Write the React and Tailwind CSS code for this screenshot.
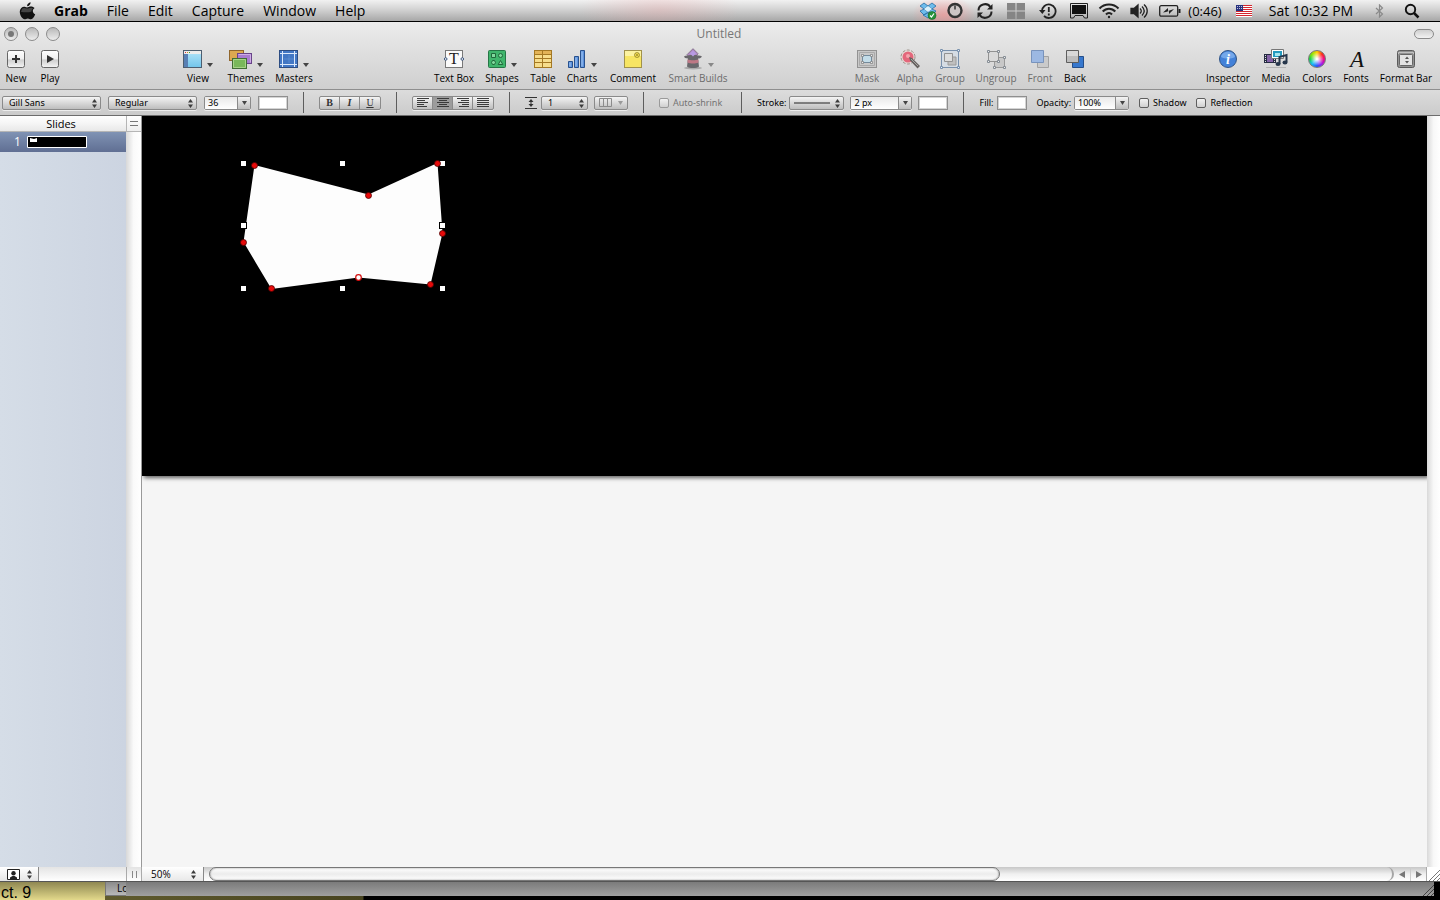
import React from "react";

function Chevrons({ className = "" }) {
  return (
    <svg className={className} width="5" height="9" viewBox="0 0 5 9" fill="#3c3c3c" aria-hidden="true">
      <path d="M2.5 0 5 3.4H0zM2.5 9 5 5.6H0z" />
    </svg>
  );
}

const boxed =
  "h-[14px] border border-[#8a8a8a] rounded-[2px] shadow-[0_1px_0_#eeeeee]";
const pressed = "bg-linear-to-b from-[#f4f4f4] to-[#bdbdbd]";

function Popup({ label, options, width, children }) {
  return (
    <span className={`relative flex ${width}`}>
      <select
        aria-label={label}
        className={`w-full appearance-none px-1.5 text-[9px] leading-3 text-black ${boxed} ${pressed}`}
      >
        {options.map((o) => (
          <option key={o}>{o}</option>
        ))}
      </select>
      {children}
      <Chevrons className="pointer-events-none absolute right-1 top-[3px]" />
    </span>
  );
}

function Combo({ label, value, width }) {
  return (
    <span className={`flex overflow-hidden bg-white ${boxed} ${width}`}>
      <input
        aria-label={label}
        defaultValue={value}
        className="w-0 min-w-0 grow bg-linear-to-b from-[#e9e9e9] to-white px-[3px] text-[9px] leading-3"
      />
      <button
        aria-label={`${label} choices`}
        className={`flex w-[13px] items-center justify-center border-l border-[#8a8a8a] ${pressed}`}
      >
        <svg width="5" height="4" viewBox="0 0 5 4" fill="#444"><path d="M0 0h5L2.5 4z" /></svg>
      </button>
    </span>
  );
}

function Swatch({ label }) {
  return (
    <button
      aria-label={label}
      className="h-[14px] w-[30px] border border-[#8f8f8f] bg-white shadow-[inset_0_0_0_1px_#d4d4d4]"
    />
  );
}

function Sep() {
  return <span className="h-[21px] w-px bg-[#5d5d5d]" />;
}

function Check({ label, disabled }) {
  return (
    <label className={`flex items-center gap-1 ${disabled ? "min-w-[67px] text-[#737373]" : "text-black"}`}>
      <input
        type="checkbox"
        disabled={disabled}
        className={`size-[10px] appearance-none rounded-[2px] border bg-linear-to-b from-[#f2f2f2] to-[#d0d0d0] ${disabled ? "border-[#9a9a9a]" : "border-[#5e5e5e]"}`}
      />
      {label}
    </label>
  );
}

function AlignIcon({ widths, right, center }) {
  return (
    <svg width="12" height="10" viewBox="0 0 12 10" fill="#3a3a3a">
      {widths.map((w, i) => (
        <rect key={i} x={right ? 12 - w : center ? (12 - w) / 2 : 0} y={i * 2} width={w} height="1" />
      ))}
    </svg>
  );
}

const iconProps = { width: 20, height: 20, viewBox: "0 0 20 20" };

const icons = {
  New: (
    <svg {...iconProps}>
      <rect x="1.5" y="1.5" width="17" height="17" rx="2" fill="url(#btn)" stroke="#666" />
      <path d="M10 6v8M6 10h8" stroke="#333" strokeWidth="2" />
    </svg>
  ),
  Play: (
    <svg {...iconProps}>
      <rect x="1.5" y="1.5" width="17" height="17" rx="2" fill="url(#btn)" stroke="#666" />
      <path d="M7 6v8l7-4z" fill="#333" />
    </svg>
  ),
  View: (
    <svg {...iconProps}>
      <rect x=".5" y="1.5" width="18" height="17" fill="url(#sky)" stroke="#4c5e70" />
      <path d="M1 2h17v3H1z" fill="#ececec" />
      <path d="M1 5h4v13H1z" fill="#5880b4" />
      <path d="M2 3h1v1H2z" fill="#d33" /><path d="M4 3h1v1H4z" fill="#c92" /><path d="M6 3h1v1H6z" fill="#3a3" />
    </svg>
  ),
  Themes: (
    <svg width="24" height="20" viewBox="0 0 24 20">
      <rect x=".5" y="1.5" width="14" height="10" fill="#dca850" stroke="#90662c" />
      <rect x="8.5" y="4.5" width="14" height="10" fill="#a97bd0" stroke="#684489" />
      <path d="M9.500 5.500h12v8" fill="none" stroke="#cfaee6" />
      <rect x="3.500" y="9.500" width="14" height="10" fill="#79b85a" stroke="#416d35" />
      <path d="M4.500 10.500h12v8h-12z" fill="none" stroke="#a7d389" />
    </svg>
  ),
  Masters: (
    <svg {...iconProps}>
      <rect x=".5" y="1.500" width="18" height="17" fill="#4277c4" stroke="#2d4d82" />
      <path d="M1 4.500h17M1 15.500h17M3.500 2v16M15.500 2v16" stroke="#dce9fb" />
      <path d="M5 10h10M10 6v8" stroke="#6798d8" strokeWidth=".6" />
    </svg>
  ),
  "Text Box": (
    <svg {...iconProps}>
      <rect x="1.500" y="1.500" width="17" height="17" fill="#fafafa" stroke="#787878" />
      <text x="10" y="15" textAnchor="middle" fontFamily="Liberation Serif, serif" fontSize="16" fill="#222">T</text>
      <circle cx="1.700" cy="10" r="1.300" fill="#fff" stroke="#39547d" />
      <circle cx="18.300" cy="10" r="1.300" fill="#fff" stroke="#39547d" />
    </svg>
  ),
  Shapes: (
    <svg {...iconProps}>
      <rect x="1.500" y="1.500" width="17" height="17" rx="1" fill="#40b56c" stroke="#267646" />
      <g fill="#82d99e" stroke="#20683b"><path d="M4.500 4.500h4v4h-4z" /><circle cx="13.500" cy="6.500" r="2" /><path d="M5.500 11.500h2l1 2-1 2h-2l-1-2zM13.500 11.500l2.300 4h-4.600z" /></g>
    </svg>
  ),
  Table: (
    <svg {...iconProps}>
      <rect x="1.500" y="1.500" width="17" height="17" fill="#f7dd8b" stroke="#a47823" />
      <path d="M2 2h16v3H2z" fill="#e3b357" />
      <path d="M2 5.500h16M2 9.500h16M2 13.500h16M9.500 2v16" stroke="#a47823" />
    </svg>
  ),
  Charts: (
    <svg {...iconProps}>
      <g fill="#5d92dc" stroke="#28518e"><path d="M1.500 12.500h4v6h-4zM7.500 7.500h4v11h-4zM13.500 1.500h4v17h-4z" /></g>
      <path d="M3 13.500v4M9 8.500v9M15 2.500v15" stroke="#a7c9f3" />
    </svg>
  ),
  Comment: (
    <svg {...iconProps}>
      <rect x="1.500" y="1.500" width="17" height="17" fill="#f7e563" stroke="#a1924b" />
      <path d="M2 2h16v5H2z" fill="#fcf2a0" />
      <circle cx="14" cy="6" r="2.500" fill="#f5e04e" stroke="#98852d" strokeWidth=".8" />
      <path d="m12.500 4.500 3 3m0-3-3 3" stroke="#98852d" strokeWidth=".7" />
    </svg>
  ),
  "Smart Builds": (
    <svg width="22" height="22" viewBox="0 0 22 22">
      <ellipse cx="11" cy="20" rx="9" ry="1.500" fill="#aaa" />
      <path d="m11 .7 5 5-4 5h-3l-4-4z" fill="#b18ac5" stroke="#85718e" />
      <path d="M2 8.500c3-2 15-2 18 0-1 1.800-3 2-4 2l1 8c-2 2-10 2-12 0l1-8c-2 0-4-1-4-2z" fill="#69686c" />
      <path d="M5.500 11.500c3 1 8 1 11 0v3c-3 1.300-8 1.300-11 0z" fill="#be7885" />
      <path d="m11 2.500 3 3-3 3-3-3z" fill="#b79be3" />
    </svg>
  ),
  Mask: (
    <svg {...iconProps}>
      <rect x=".5" y="1.500" width="19" height="17" fill="#c8c8c8" stroke="#929292" />
      <path d="M2.500 3.500h15v13h-15z" fill="none" stroke="#aaa" />
      <rect x="5.500" y="6.500" width="9" height="7" fill="#c3dce8" stroke="#748b9c" />
      <path d="M4.500 5.500h2v2h-2zM13.500 5.500h2v2h-2zM4.500 12.500h2v2h-2zM13.500 12.500h2v2h-2z" fill="#eee" stroke="#7d7d7d" strokeWidth=".7" />
    </svg>
  ),
  Alpha: (
    <svg {...iconProps}>
      <circle cx="8" cy="8" r="7" fill="#e5ded9" stroke="#9b8f88" strokeDasharray="3 1.500" />
      <circle cx="8" cy="8" r="5.500" fill="#e4677b" />
      <circle cx="8" cy="7" r="2" fill="#f3a5ac" />
      <path d="m9 8 3 1 8 8-2.500 2.500-7.500-8z" fill="#66625f" />
      <path d="m11 10 7 7" stroke="#a5a5a5" />
    </svg>
  ),
  Group: (
    <svg {...iconProps}>
      <rect x="1.500" y="1.500" width="17" height="17" fill="#d5dce4" stroke="#7890ac" />
      <path d="M8 8h8v8H8z" fill="#bfbfbf" stroke="#9a9a9a" /><path d="M4.500 4.500h8v8h-8z" fill="#ddd" stroke="#929292" />
      <g fill="#e9f1fc" stroke="#7890ac"><path d="M.500.500h2v2h-2zM17.500.500h2v2h-2zM.500 17.500h2v2h-2zM17.500 17.500h2v2h-2z" /></g>
    </svg>
  ),
  Ungroup: (
    <svg {...iconProps}>
      <path d="M8.500 8.500h10v10h-10z" fill="#c8c8c8" stroke="#999" /><path d="M2.500 2.500h10v10h-10z" fill="#dadada" stroke="#929292" />
      <g fill="#eee" stroke="#858c94"><path d="M1.500 1.500h2v2h-2zM11.500 1.500h2v2h-2zM1.500 11.500h2v2h-2zM11.500 11.500h2v2h-2zM17.500 7.500h2v2h-2zM7.500 17.500h2v2h-2zM17.500 17.500h2v2h-2z" /></g>
    </svg>
  ),
  Front: (
    <svg {...iconProps}>
      <path d="M7.500 7.500h11v11h-11z" fill="#cacaca" stroke="#a2a2a2" />
      <path d="M1.500 1.500h12v12h-12z" fill="#9cb8e2" stroke="#7893bc" />
    </svg>
  ),
  Back: (
    <svg {...iconProps}>
      <path d="M7.500 7.500h11v11h-11z" fill="#3778ce" stroke="#254f8a" />
      <path d="M1.500 1.500h12v12h-12z" fill="#bdbdbd" stroke="#5e5e5e" /><path d="M2 2h11v5H2z" fill="#d8d8d8" />
    </svg>
  ),
  Inspector: (
    <svg {...iconProps}>
      <circle cx="10" cy="10" r="8.500" fill="#4381d8" stroke="#315587" />
      <path d="M3 8c1-7 13-7 14 0-4 2-10 2-14 0z" fill="#74a8ea" />
      <text x="10" y="15" textAnchor="middle" fontFamily="Liberation Serif, serif" fontSize="14" fontStyle="italic" fontWeight="700" fill="#fff">i</text>
    </svg>
  ),
  Media: (
    <svg width="26" height="20" viewBox="0 0 26 20">
      <path d="M1 5h12v9H1z" fill="#252b42" /><path d="M4 6h6v7H4z" fill="#8564a8" /><path d="M2.500 6v7M11.500 6v7" stroke="#ddd" strokeDasharray="1 1" />
      <path d="M8.500.500h12v9h-12z" fill="#fff" stroke="#777" /><path d="M10 2h9v6h-9z" fill="#259bc0" /><path d="M12 4h5v3h-5z" fill="#a6e5ef" />
      <path d="M16.500 15V8l7-2v7" fill="none" stroke="#26364b" strokeWidth="2" /><ellipse cx="15" cy="15" rx="2.500" ry="2" fill="#26364b" /><ellipse cx="22" cy="13.500" rx="2.500" ry="2" fill="#26364b" />
      <path d="M3 18.500h20" stroke="#b4b4b4" />
    </svg>
  ),
  Colors: (
    <span className="size-[18px] rounded-full border border-[#777] bg-[radial-gradient(circle,white_5%,transparent_60%),conic-gradient(from_0deg,#ffd000,#ff2a16,#f10583,#a418e8,#2455ff,#12bdf2,#12d345,#8ce400,#ffd000)]" />
  ),
  Fonts: (
    <svg width="20" height="22" viewBox="0 0 20 22">
      <text x="11" y="19" textAnchor="middle" fontFamily="Liberation Serif, serif" fontSize="23" fontStyle="italic" fill="#111">A</text>
    </svg>
  ),
  "Format Bar": (
    <svg {...iconProps}>
      <rect x="1.500" y="1.500" width="17" height="17" rx="2" fill="#929292" stroke="#5b5b5b" />
      <path d="M2.500 5V3.500h15V5" fill="none" stroke="#c1c1c1" />
      <rect x="3.500" y="5.500" width="13" height="11" rx="1" fill="#e3e3e3" stroke="#666" />
      <path d="m11 7.500 2 2.500H9zM11 14.500 9 12h4z" fill="#555" />
    </svg>
  ),
};

const groups = [
  [["New", "w-8"], ["Play", "w-9"]],
  [["View", "w-12", true], ["Themes", "w-12", true], ["Masters", "w-12", true]],
  [["Text Box", "w-12"], ["Shapes", "w-12", true], ["Table", "w-[34px]"], ["Charts", "w-11", true], ["Comment", "w-[58px]"], ["Smart Builds", "w-[72px]", true, true]],
  [["Mask", "w-11", false, true], ["Alpha", "w-[42px]", false, true], ["Group", "w-[38px]", false, true], ["Ungroup", "w-[54px]", false, true], ["Front", "w-[34px]", false, true], ["Back", "w-9"]],
  [["Inspector", "w-[54px]"], ["Media", "w-[42px]"], ["Colors", "w-10"], ["Fonts", "w-[38px]"], ["Format Bar", "w-[62px]"]],
];

const spacers = ["", "grow-[106]", "grow-[112]", "grow-[111]", "grow-[108]"];

function Tool({ name, width, menu, disabled }) {
  return (
    <button disabled={disabled} className={`flex flex-col items-center ${width}`}>
      <span className="flex h-[22px] items-center gap-1">
        {icons[name]}
        {menu && (
          <svg className="mt-3" width="6" height="4" viewBox="0 0 6 4" fill={disabled ? "#888" : "#444"}><path d="M0 0h6L3 4z" /></svg>
        )}
      </span>
      <span className={`whitespace-nowrap text-[10px] leading-4 ${disabled ? "text-[#6c6c6c]" : "text-black"}`}>{name}</span>
    </button>
  );
}

function MenuBar() {
  return (
    <header className="flex h-[22px] shrink-0 items-center border-b border-black bg-[radial-gradient(ellipse_32px_20px_at_944px_15px,#ff8c8c90,transparent),radial-gradient(ellipse_80px_30px_at_660px_10px,#ee9c9c48,transparent),linear-gradient(#f1f1f1,#cfcfcf_50%,#a7a7a7)] text-sm leading-5">
      <button aria-label="Apple menu" className="ml-[19px] mr-[18px]">
        <svg width="17" height="18" viewBox="0 0 17 18">
          <path d="M11.600.2c.2 2-1.700 4-3.500 4C7.900 2.300 9.700.5 11.600.2zM15.600 6c-2.600 1.500-2.300 5 .6 6.200-.8 2.200-2.300 5-4.200 5-1.300 0-1.700-.8-3.200-.8s-2 .8-3.200.8C3 17.200.5 12.500.8 9.300 1 5.800 4.200 4 6.300 4.900c1.600.7 2 .6 3.400 0 2-.9 4.600-.5 5.900 1.100z" fill="#111" />
          <path d="M3 7c2-2 4 0 6-.500s4-1.500 5 0c-2 2-1.500 3-1.500 3C9 11 4 10 2 10z" fill="#444" />
        </svg>
      </button>
      <nav className="flex gap-[19px]">
        <button className="font-bold">Grab</button>
        {["File", "Edit", "Capture", "Window", "Help"].map((m) => <button key={m}>{m}</button>)}
      </nav>
      <div className="ml-auto flex items-center pr-[17px] *:flex *:justify-center">
        <button aria-label="Dropbox" className="w-[26px]">
          <svg width="18" height="18" viewBox="0 0 18 18">
            <path d="m1 4 4-3 4 3-4 3zM9 4l4-3 4 3-4 3zM1 9l4-2 4 3-4 3zM9 10l4-3 4 2-4 4zM4 13l5-2 4 2-4 3z" fill="#6ebcec" stroke="#276da4" strokeWidth=".8" />
            <path d="m5 7 4-3 4 3-4 3z" fill="#d9f1fc" />
            <circle cx="13" cy="13.500" r="4" fill="#25933b" stroke="#176428" strokeWidth=".6" /><path d="m11 13.500 1.500 1.500 2.500-3.500" fill="none" stroke="#fff" strokeWidth="1.200" />
          </svg>
        </button>
        <button aria-label="Activity" className="w-7">
          <svg width="18" height="18" viewBox="0 0 18 18" fill="none"><circle cx="9" cy="8.500" r="6.500" fill="#cdc5c5" stroke="#333" strokeWidth="2.400" /><path d="M9 3.500v4" stroke="#333" strokeWidth="1.500" /></svg>
        </button>
        <button aria-label="Sync" className="w-8">
          <svg width="18" height="18" viewBox="0 0 18 18" fill="none" stroke="#222" strokeWidth="2"><path d="M2.500 8.500c0-6.500 8.500-8.500 11.800-3.500M15.500 9.500c0 6.500-8.500 8.500-11.800 3.500" /><path d="M16.500 2v5.500H11zM1.500 16v-5.500H7z" fill="#222" stroke="none" /></svg>
        </button>
        <button aria-label="Spaces" className="w-[30px]">
          <svg width="18" height="16" viewBox="0 0 18 16" fill="#858585"><path d="M0 0h8.500v7.500H0zM9.500 0H18v7.500H9.500zM0 8.500h8.500V16H0zM9.500 8.500H18V16H9.500z" /></svg>
        </button>
        <button aria-label="Time Machine" className="w-[34px]">
          <svg width="18" height="18" viewBox="0 0 18 18" fill="none" stroke="#222" strokeWidth="1.800"><path d="M3 9.500A6.800 6.800 0 1 1 5 14" /><path d="M0 8h6.500l-3.200 4z" fill="#222" stroke="none" /><path d="M9.800 5v5M9.800 11.500v2" strokeWidth="1.800" /></svg>
        </button>
        <button aria-label="Display" className="w-7">
          <svg width="18" height="16" viewBox="0 0 18 16"><path d="M.5.500h17V15h-3l-1.500-2.500H5L3.500 15h-3z" fill="none" stroke="#222" /><path d="M2 2h14v9H2z" fill="#111" /></svg>
        </button>
        <button aria-label="Wi-Fi" className="w-8">
          <svg width="22" height="17" viewBox="0 0 22 17" fill="none" stroke="#222" strokeWidth="2"><path d="M1.500 6.500c5-5.300 14-5.300 19 0M4.700 9.500c3.500-3.800 9.100-3.800 12.600 0M8 12.500c1.700-2 4.300-2 6 0" /><circle cx="11" cy="15" r="1.200" fill="#222" stroke="none" /></svg>
        </button>
        <button aria-label="Volume" className="w-7">
          <svg width="18" height="16" viewBox="0 0 18 16" fill="none" stroke="#222" strokeWidth="1.300"><path d="M1 5.500h3l4-3.500v12l-4-3.500H1z" fill="#222" /><path d="M10 5.500c1.700 1.500 1.700 3.500 0 5M12 3.500c3 3 3 6 0 9M14 1.500c4.300 3.700 4.300 9.300 0 13" /></svg>
        </button>
        <button aria-label="Battery" className="w-[34px]">
          <svg width="22" height="12" viewBox="0 0 22 12" fill="none" stroke="#222"><rect x=".7" y=".7" width="18" height="10.500" rx="1.500" strokeWidth="1.300" /><path d="M20.500 4v4" strokeWidth="2" /><path d="m4 7.500 5-4.500v3l3-1 3-1-5 5V6L7 7z" fill="#222" stroke="none" /></svg>
        </button>
        <span className="w-9 whitespace-nowrap text-[13px]">(0:46)</span>
        <button aria-label="Input source" className="w-[42px]">
          <svg width="16" height="12" viewBox="0 0 16 12"><path fill="#fff" d="M0 0h16v12H0z" /><path d="M0 .5h16M0 2.500h16M0 4.500h16M0 6.500h16M0 8.500h16M0 10.500h16" stroke="#d4262e" /><path fill="#27327f" d="M0 0h7v6H0z" /><path d="M1 1.500h5M1 3.500h5" stroke="#fff" strokeWidth=".7" strokeDasharray="1 1" /></svg>
        </button>
        <time className="w-[92px] whitespace-nowrap">Sat 10:32 PM</time>
        <button aria-label="Bluetooth" className="w-11">
          <svg width="9" height="14" viewBox="0 0 9 14" fill="none" stroke="#8a8a8a" strokeWidth="1.200"><path d="m1 4 6.500 6L4.500 13V1l3 3L1 10" /></svg>
        </button>
        <button aria-label="Spotlight" className="w-[22px]">
          <svg width="16" height="16" viewBox="0 0 16 16" fill="none" stroke="#111"><circle cx="6.500" cy="6.500" r="4.700" strokeWidth="1.900" /><path d="m10 10 4.500 4.500" strokeWidth="2.500" /></svg>
        </button>
      </div>
    </header>
  );
}

function FormatBar() {
  const seg = "flex w-5 items-center justify-center border-r border-[#8a8a8a] last:border-r-0";
  return (
    <div className="flex h-[27px] shrink-0 items-center gap-[15px] overflow-hidden whitespace-nowrap border-b border-[#6d6d6d] border-t border-t-[#8e8e8e] bg-linear-to-b from-[#dcdcdc] to-[#cbcbcb] pl-0.5 font-['Noto_Sans','Open_Sans',sans-serif] text-[9px] leading-3">
      <div className="flex items-center gap-[7px]">
        <Popup label="Font family" options={["Gill Sans"]} width="w-[99px]" />
        <Popup label="Typeface" options={["Regular"]} width="w-[89px]" />
        <Combo label="Font size" value="36" width="w-[47px]" />
        <Swatch label="Text color" />
      </div>
      <Sep />
      <div className={`flex overflow-hidden font-['Liberation_Serif',serif] text-[10px] text-[#333] ${boxed} ${pressed}`}>
        <button className={`${seg} font-bold`}>B</button>
        <button className={`${seg} font-bold italic`}>I</button>
        <button className={`${seg} underline`}>U</button>
      </div>
      <Sep />
      <div className={`flex overflow-hidden ${boxed} ${pressed}`}>
        <button aria-label="Align left" className={seg}><AlignIcon widths={[12, 8, 11, 7, 10]} /></button>
        <button aria-label="Align center" className={`${seg} bg-[#9c9c9c]`}><AlignIcon center widths={[12, 8, 12, 8, 12]} /></button>
        <button aria-label="Align right" className={seg}><AlignIcon right widths={[12, 8, 11, 7, 10]} /></button>
        <button aria-label="Justify" className={seg}><AlignIcon widths={[12, 12, 12, 12, 12]} /></button>
      </div>
      <Sep />
      <div className="flex items-center gap-1">
        <svg width="12" height="12" viewBox="0 0 12 12" fill="#333"><path d="M0 0h12v1H0zM0 11h12v1H0zM6 2l2.500 3h-5zM6 10l2.500-3h-5z" /><path d="M5.500 4h1v4h-1z" /></svg>
        <Popup label="Line spacing" options={["1"]} width="w-[47px]" />
        <button aria-label="Columns" disabled className={`ml-0.5 flex w-[34px] items-center justify-center gap-1.5 ${boxed} ${pressed}`}>
          <svg width="13" height="9" viewBox="0 0 13 9" fill="none" stroke="#8b8b8b"><path d="M.5.500h12v8H.5zM4.500.500v8M8.500.500v8" /></svg>
          <svg width="5" height="4" viewBox="0 0 5 4" fill="#999"><path d="M0 0h5L2.500 4z" /></svg>
        </button>
      </div>
      <Sep />
      <Check label="Auto-shrink" disabled />
      <Sep />
      <div className="flex items-center gap-1.5">
        <div className="flex items-center gap-[3px]">
          <span>Stroke:</span>
          <Popup label="Stroke style" options={[""]} width="w-[55px]">
            <svg className="pointer-events-none absolute left-[5px] top-1.5" width="36" height="2"><path d="M0 1h36" stroke="#222" /></svg>
          </Popup>
        </div>
        <Combo label="Stroke width" value="2 px" width="w-[62px]" />
        <Swatch label="Stroke color" />
      </div>
      <Sep />
      <div className="flex items-center gap-2.5">
        <div className="flex items-center gap-[3px]"><span>Fill:</span><Swatch label="Fill color" /></div>
        <div className="flex items-center gap-[3px]"><span>Opacity:</span><Combo label="Opacity" value="100%" width="w-[55px]" /></div>
        <Check label="Shadow" />
        <Check label="Reflection" />
      </div>
    </div>
  );
}

const handles = [[243, 163], [342, 163], [442, 163], [243, 225], [442, 225], [243, 288], [342, 288], [442, 288]];
const points = [[254, 165], [368, 195], [437, 163], [442, 233], [430, 284], [271, 288], [243, 242]];

function Slide() {
  return (
    <div className="h-[360px] bg-black shadow-[2px_2px_4px_#00000099]">
      <svg width="320" height="200" viewBox="142 116 320 200">
        <path d="M254.500 165 368.500 194.500 437.500 163 442.500 233 430.500 284.500 358.500 277.500 271.500 289 243.500 242z" fill="#fdfdfd" />
        {handles.map(([x, y]) => <rect key={`${x}-${y}`} x={x - 2.5} y={y - 2.5} width="6" height="6" fill="#fff" stroke="#000" />)}
        {points.map(([x, y]) => <circle key={`${x}-${y}`} cx={x + 0.5} cy={y + 0.5} r="3" fill="#e60a0a" stroke="#4b0000" strokeWidth=".8" />)}
        <circle cx="358.500" cy="277.500" r="2.800" fill="#fff" stroke="#d40e0e" strokeWidth="1.200" />
      </svg>
    </div>
  );
}

function Grip({ color }) {
  return <svg width="11" height="11" viewBox="0 0 11 11" stroke={color}><path d="m0 11 11-11M4 11l7-7M8 11l3-3" /></svg>;
}

function StatusBar() {
  return (
    <footer className="flex h-[15px] shrink-0 border-b border-[#555] bg-linear-to-b from-[#e4e4e4] to-white text-[10px] leading-[14px]">
      <div className="flex w-[127px] shrink-0 border-r border-[#aaa]">
        <span className="relative flex w-[39px] items-center border-r border-[#888] bg-linear-to-b from-white to-[#e4e4e4]">
          <select aria-label="Slide thumbnails" className="absolute inset-0 w-full appearance-none" />
          <svg className="pointer-events-none ml-[7px]" width="13" height="11" viewBox="0 0 13 11"><path d="M.5.500h12v10H.5z" fill="#fff" stroke="#222" /><circle cx="6.500" cy="4.200" r="2.200" fill="#222" /><path d="M3 10V8.500L5.500 7h2L10 8.500V10z" fill="#222" /></svg>
          <Chevrons className="pointer-events-none ml-[7px]" />
        </span>
      </div>
      <div className="flex w-[15px] shrink-0 items-center justify-center border-r border-[#aaa]">
        <svg width="5" height="7" viewBox="0 0 5 7"><path d="M.5 0v7M4.500 0v7" stroke="#888" /></svg>
      </div>
      <span className="relative flex w-[62px] shrink-0 border-r border-[#888]">
        <select aria-label="Zoom" className="w-full appearance-none bg-linear-to-b from-white to-[#e8e8e8] px-[9px]"><option>50%</option></select>
        <Chevrons className="pointer-events-none absolute right-[7px] top-[3px]" />
      </span>
      <div className="flex grow bg-linear-to-b from-[#c7c7c7] via-[#f0f0f0] to-white pl-[5px]">
        <div className="flex grow rounded-r-full border-r-2 border-[#a5a5a5]">
          <div className="w-[791px] rounded-full border border-[#777] bg-linear-to-b from-white via-[#ececec] to-white shadow-[inset_0_0_2px_#888]" />
        </div>
        <button aria-label="Scroll left" className="flex w-[17px] items-center justify-center border-r border-[#ccc]"><svg width="6" height="7" viewBox="0 0 6 7" fill="#777"><path d="M6 0v7L0 3.500z" /></svg></button>
        <button aria-label="Scroll right" className="flex w-4 items-center justify-center border-r border-[#aaa]"><svg width="6" height="7" viewBox="0 0 6 7" fill="#777"><path d="M0 0v7l6-3.500z" /></svg></button>
      </div>
      <div className="flex w-[13px] shrink-0 items-end justify-end bg-white"><Grip color="#777" /></div>
    </footer>
  );
}

function Background() {
  return (
    <div className="flex h-[18px] shrink-0 overflow-hidden bg-[linear-gradient(90deg,#6a6534_0,#47431f_363px,#000_364px)]">
      <div className="w-[105px] shrink-0 bg-linear-to-b from-[#8f8852] to-[#e3d98b] pl-px pt-0.5 font-['Liberation_Sans',Arial,sans-serif] text-base leading-[18px]">ct. 9</div>
      <div className="h-3.5 w-[21px] shrink-0 overflow-hidden border-b border-l border-[#777] bg-linear-to-b from-[#8b8b8b] to-[#b8b8b8] pl-[11px] text-[10px] leading-3">Lo</div>
      <div className="mr-[6px] flex h-3.5 grow items-end justify-end bg-linear-to-b from-[#7b7b7b] to-[#a0a0a0]"><Grip color="#444" /></div>
    </div>
  );
}

export default function App() {
  return (
    <div className="flex h-screen min-h-[520px] flex-col overflow-hidden bg-black font-['Open_Sans','Noto_Sans',sans-serif] text-black">
      <svg className="absolute" width="0" height="0" aria-hidden="true">
        <linearGradient id="btn" x2="0" y2="1"><stop stopColor="#fff" /><stop offset=".5" stopColor="#f0f0f0" /><stop offset=".55" stopColor="#cfcfcf" /><stop offset="1" stopColor="#f5f5f5" /></linearGradient>
        <linearGradient id="sky" x2="0" y2="1"><stop stopColor="#b5e6fa" /><stop offset="1" stopColor="#72c5eb" /></linearGradient>
      </svg>
      <MenuBar />
      <div className="shrink-0 bg-linear-to-b from-[#ececec] to-[#cfcfcf]">
        <div className="flex h-[23px] items-center px-1">
          <div className="flex flex-1 gap-[7px]">
            {["Close", "Minimize", "Zoom window"].map((n, i) => (
              <button key={n} aria-label={n} className="flex size-3.5 items-center justify-center rounded-full border border-[#8b8b8b] bg-linear-to-b from-[#b9b9b9] to-[#ededed]">
                {i === 0 && <span className="size-1.5 rounded-full bg-[#777]" />}
              </button>
            ))}
          </div>
          <h1 className="text-xs leading-4 text-[#777]">Untitled</h1>
          <div className="flex flex-1 justify-end pr-0.5">
            <button aria-label="Toggle toolbar" className="h-2.5 w-5 rounded-full border border-[#8b8b8b] bg-linear-to-b from-[#cfcfcf] to-[#f2f2f2]" />
          </div>
        </div>
        <div className="flex h-11 pr-[3px] pt-[3px]">
          {groups.map((g, i) => (
            <React.Fragment key={g[0][0]}>
              {i > 0 && <span className={spacers[i]} />}
              <div className="flex">
                {g.map(([name, width, menu, disabled]) => <Tool key={name} name={name} width={width} menu={menu} disabled={disabled} />)}
              </div>
            </React.Fragment>
          ))}
        </div>
      </div>
      <FormatBar />
      <main className="flex min-h-0 grow">
        <aside className="flex w-[126px] shrink-0 flex-col bg-linear-to-r from-[#d5dde7] to-[#ccd4e1]">
          <h2 className="h-4 border-b border-[#b5b5b5] bg-linear-to-b from-white via-[#f5f5f5] to-[#e8e8e8] pr-1 text-center text-[11px] leading-[15px]">Slides</h2>
          <button className="flex h-5 items-center bg-linear-to-b from-[#8093b4] to-[#606f93] pl-3.5 text-xs text-white">
            <span className="w-[13px] text-left">1</span>
            <svg width="60" height="12" viewBox="0 0 60 12"><path d="M.5.500h59v11H.5z" fill="#000" stroke="#fff" /><path d="m3 2 4 1 3-1v4H3z" fill="#fff" /></svg>
          </button>
        </aside>
        <div className="flex w-4 shrink-0 flex-col border-r border-[#999] bg-linear-to-r from-[#d8d8d8] via-[#fafafa] to-white">
          <div className="flex h-4 items-center justify-center border-b border-l border-[#b5b5b5] bg-linear-to-b from-white to-[#eee]">
            <svg width="8" height="5" viewBox="0 0 8 5"><path d="M0 .5h8M0 4.500h8" stroke="#777" /></svg>
          </div>
        </div>
        <section aria-label="Slide canvas" className="grow overflow-hidden bg-[#f5f5f5]"><Slide /></section>
        <div className="w-[13px] shrink-0 bg-linear-to-r from-[#d9d9d9] via-[#f8f8f8] to-white" />
      </main>
      <StatusBar />
      <Background />
    </div>
  );
}
